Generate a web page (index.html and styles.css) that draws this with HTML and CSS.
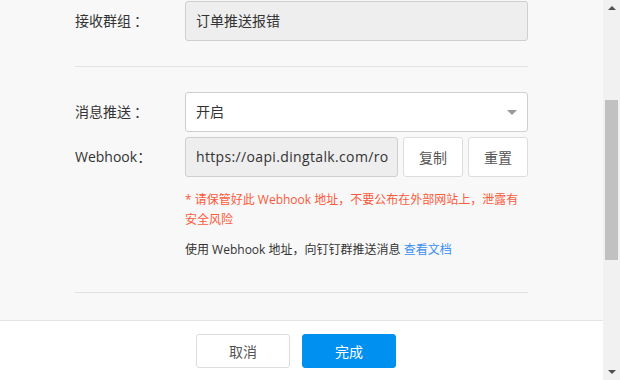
FILE: index.html
```html
<!DOCTYPE html>
<html lang="zh-CN">
<head>
<meta charset="utf-8">
<title>Webhook 设置</title>
<link rel="stylesheet" href="styles.css">
</head>
<body>
<div class="page">
  <div class="main">
    <div class="content">
      <div class="row">
        <div class="label">接收群组<span class="colon">：</span></div>
        <div class="field field-disabled">订单推送报错</div>
      </div>
      <div class="divider divider-top"></div>
      <div class="row row-select">
        <div class="label">消息推送<span class="colon">：</span></div>
        <div class="field field-select">开启<span class="caret"></span></div>
      </div>
      <div class="row row-webhook">
        <div class="label">Webhook：</div>
        <div class="webhook">
          <div class="field field-disabled field-url">https://oapi.dingtalk.com/ro</div>
          <button class="btn btn-small">复制</button>
          <button class="btn btn-small">重置</button>
        </div>
      </div>
      <p class="warn">* 请保管好此 Webhook 地址，不要公布在外部网站上，泄露有安全风险</p>
      <p class="info">使用 Webhook 地址，向钉钉群推送消息 <a class="link" href="#">查看文档</a></p>
      <div class="divider divider-bottom"></div>
    </div>
    <div class="footer">
      <button class="btn btn-footer">取消</button>
      <button class="btn btn-footer btn-primary">完成</button>
    </div>
  </div>
  <div class="scrollbar">
    <span class="sb-arrow sb-up"></span>
    <div class="sb-track"><div class="sb-thumb"></div></div>
    <span class="sb-arrow sb-down"></span>
  </div>
</div>
</body>
</html>
```
FILE: styles.css
```css
html, body {
  margin: 0;
  padding: 0;
}
body {
  font-family: "Open Sans", "Noto Sans CJK SC", sans-serif;
  color: #333;
  background: #f8f8f8;
  width: 620px;
  height: 380px;
  overflow: hidden;
}
.page {
  display: flex;
  width: 620px;
  height: 380px;
}
.main {
  width: 603px;
  display: flex;
  flex-direction: column;
}
.content {
  height: 320px;
  box-sizing: border-box;
  padding: 1px 75px 0 75px;
  background: #f8f8f8;
}
.row {
  display: flex;
  align-items: center;
  width: 453px;
}
.label {
  width: 110px;
  flex: none;
  font-size: 14px;
  line-height: 20px;
  color: #333;
}
.colon {
  margin-left: 3px;
}
.field {
  box-sizing: border-box;
  height: 40px;
  flex: 1;
  border: 1px solid #cfcfcf;
  border-radius: 3px;
  padding: 0 10px;
  font-size: 14px;
  line-height: 38px;
  color: #333;
  position: relative;
  white-space: nowrap;
  overflow: hidden;
}
.field-disabled {
  background: #eeeeee;
}
.field-select {
  background: #fff;
}
.caret {
  position: absolute;
  right: 10px;
  top: 17px;
  width: 0;
  height: 0;
  border-left: 5px solid transparent;
  border-right: 5px solid transparent;
  border-top: 5px solid #999;
}
.divider {
  height: 1px;
  background: #e2e2e2;
  width: 453px;
}
.divider-top {
  margin-top: 25px;
}
.row-select {
  margin-top: 25px;
}
.row-webhook {
  margin-top: 5px;
}
.webhook {
  display: flex;
  flex: 1;
  gap: 5px;
}
.field-url {
  flex: none;
  width: 213px;
  letter-spacing: 0.35px;
}
.btn {
  font-family: "Open Sans", "Noto Sans CJK SC", sans-serif;
  box-sizing: border-box;
  border: 1px solid #ddd;
  border-radius: 3px;
  background: #fff;
  color: #555;
  font-size: 14px;
  padding: 0;
  cursor: pointer;
}
.btn-small {
  width: 60px;
  height: 40px;
}
.warn {
  margin: 13px 0 0 110px;
  width: 343px;
  font-size: 12px;
  line-height: 20px;
  color: #fa5a3c;
}
.info {
  margin: 10px 0 0 110px;
  font-size: 12px;
  line-height: 20px;
  color: #333;
}
.link {
  color: #3a8ef0;
  text-decoration: none;
}
.divider-bottom {
  margin-top: 32px;
}
.footer {
  flex: 1;
  background: #fff;
  border-top: 1px solid #e3e3e3;
  display: flex;
  gap: 12px;
  padding: 13px 0 0 196px;
  box-sizing: border-box;
  align-items: flex-start;
}
.btn-footer {
  width: 94px;
  height: 34px;
  color: #555;
}
.btn-primary {
  background: #0090f0;
  border-color: #0090f0;
  color: #fff;
}
.scrollbar {
  width: 17px;
  height: 380px;
  background: #f1f1f1;
  display: flex;
  flex-direction: column;
  align-items: center;
}
.sb-arrow {
  flex: none;
  width: 0;
  height: 0;
  border-left: 4px solid transparent;
  border-right: 4px solid transparent;
}
.sb-up {
  margin-top: 6px;
  border-bottom: 4px solid #505050;
}
.sb-down {
  margin-bottom: 6px;
  border-top: 4px solid #505050;
}
.sb-track {
  flex: 1;
  width: 13px;
  position: relative;
}
.sb-thumb {
  margin-top: 90px;
  height: 160px;
  width: 13px;
  background: #c1c1c1;
}
```
